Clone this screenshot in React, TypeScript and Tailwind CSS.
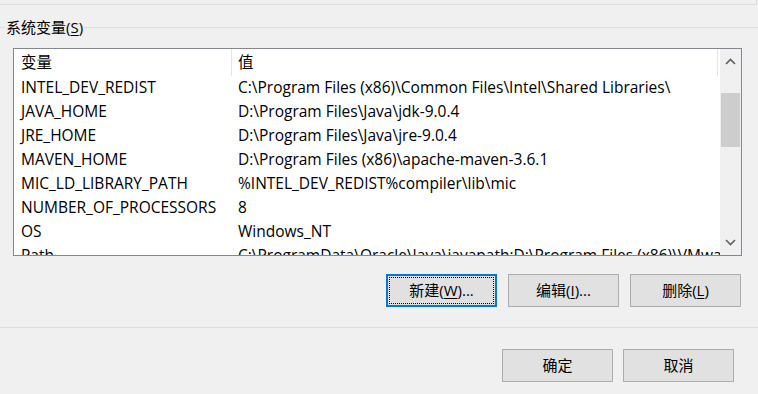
import { ReactNode } from 'react';

interface EnvVar {
  name: string;
  value: string;
}

const systemVars: EnvVar[] = [
  { name: 'INTEL_DEV_REDIST', value: 'C:\\Program Files (x86)\\Common Files\\Intel\\Shared Libraries\\' },
  { name: 'JAVA_HOME', value: 'D:\\Program Files\\Java\\jdk-9.0.4' },
  { name: 'JRE_HOME', value: 'D:\\Program Files\\Java\\jre-9.0.4' },
  { name: 'MAVEN_HOME', value: 'D:\\Program Files (x86)\\apache-maven-3.6.1' },
  { name: 'MIC_LD_LIBRARY_PATH', value: '%INTEL_DEV_REDIST%compiler\\lib\\mic' },
  { name: 'NUMBER_OF_PROCESSORS', value: '8' },
  { name: 'OS', value: 'Windows_NT' },
  { name: 'Path', value: 'C:\\ProgramData\\Oracle\\Java\\javapath;D:\\Program Files (x86)\\VMware\\' },
];

const FONT = 'font-["Segoe_UI","Open_Sans","Noto_Sans_CJK_SC",sans-serif]';

function WinButton({ children, focused = false }: { children: ReactNode; focused?: boolean }) {
  if (focused) {
    return (
      <button className="w-[111px] h-[33px] bg-[#e1e1e1] border-2 border-[#0078d7] p-px flex">
        <span className="flex-1 flex items-center justify-center border border-dotted border-black text-[15px] text-black">
          {children}
        </span>
      </button>
    );
  }
  return (
    <button className="w-[111px] h-[33px] bg-[#e1e1e1] border border-[#adadad] flex items-center justify-center text-[15px] text-black">
      {children}
    </button>
  );
}

function Chevron({ up }: { up?: boolean }) {
  return (
    <svg width="11" height="7" viewBox="0 0 11 7" className={up ? '' : 'rotate-180'}>
      <path d="M1 6 L5.5 1.5 L10 6" fill="none" stroke="#606060" strokeWidth="1.6" />
    </svg>
  );
}

function ScrollBar() {
  return (
    <div className="w-[21px] bg-[#f0f0f0] flex flex-col">
      <div className="h-[25px] flex items-center justify-center">
        <Chevron up />
      </div>
      <div className="flex-1 pt-[19px]">
        <div className="h-[54px] mx-px bg-[#cdcdcd]" />
      </div>
      <div className="h-[25px] flex items-center justify-center">
        <Chevron />
      </div>
    </div>
  );
}

export default function App() {
  return (
    <div className={`w-[758px] h-[394px] bg-[#f0f0f0] overflow-hidden ${FONT} text-black`}>
      {/* bottom edge of the user-variables group above */}
      <div className="h-[5px] w-[757px] border-b border-r border-[#dcdcdc]" />

      <fieldset className="mt-[12px] -ml-[2px] w-[759px] h-[311px] border border-[#dcdcdc] pl-[14px] pr-[16px]">
        <legend className="-ml-[8px] px-px text-[15px] leading-[20px]">
          系统变量(<span className="underline underline-offset-2">S</span>)
        </legend>

        <div className="mt-[11px] w-[729px] h-[208px] border border-[#828790] bg-white flex">
          <div className="flex-1 overflow-hidden text-[15.5px]">
            <div className="flex h-[27px] items-center">
              <div className="w-[218px] h-full flex items-center pl-[7px] border-r border-[#e5e5e5]">变量</div>
              <div className="w-[486px] h-full flex items-center pl-[6px] border-r border-[#e5e5e5]">值</div>
            </div>
            {systemVars.map((v) => (
              <div key={v.name} className="flex h-[24px] items-center whitespace-nowrap">
                <div className="w-[218px] pl-[7px]">{v.name}</div>
                <div className="flex-1 pl-[6px] overflow-hidden">{v.value}</div>
              </div>
            ))}
          </div>
          <ScrollBar />
        </div>

        <div className="mt-[18px] flex justify-end gap-[11px] w-[728px]">
          <WinButton focused>
            新建(<span className="underline underline-offset-2">W</span>)...
          </WinButton>
          <WinButton>
            编辑(<span className="underline underline-offset-2">I</span>)...
          </WinButton>
          <WinButton>
            删除(<span className="underline underline-offset-2">L</span>)
          </WinButton>
        </div>
      </fieldset>

      <div className="mt-[21px] flex justify-end gap-[10px] pr-[24px]">
        <WinButton>确定</WinButton>
        <WinButton>取消</WinButton>
      </div>
    </div>
  );
}
